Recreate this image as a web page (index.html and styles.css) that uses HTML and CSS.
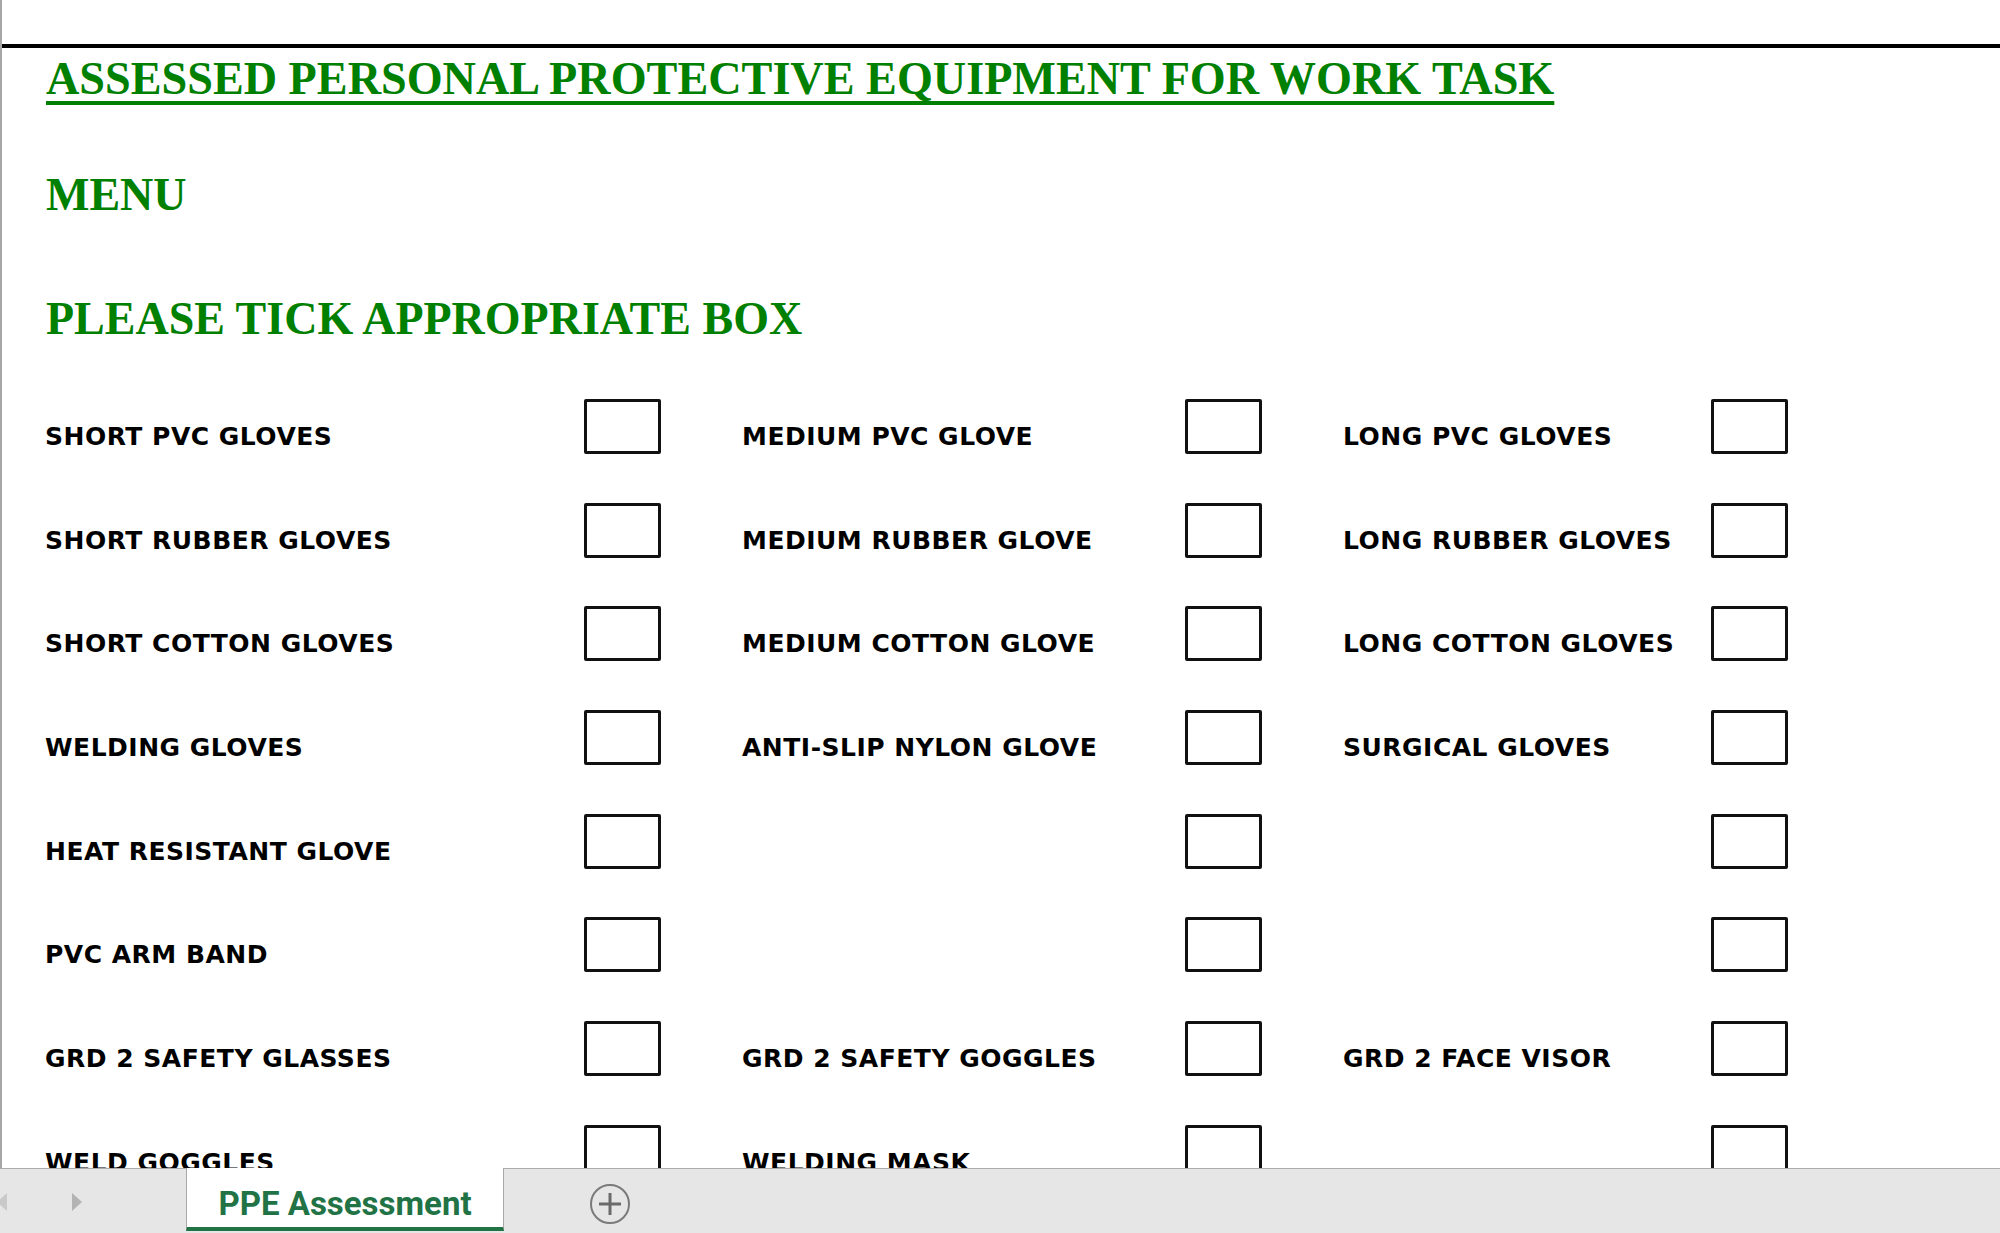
FILE: index.html
```html
<!DOCTYPE html>
<html>
<head>
<meta charset="utf-8">
<link rel="stylesheet" href="styles.css">
</head>
<body>
<div class="sheet">
  <div class="topband"></div>
  <div class="content">
    <h1 class="title">ASSESSED PERSONAL PROTECTIVE EQUIPMENT FOR WORK TASK</h1>
    <h2 class="menu">MENU</h2>
    <h2 class="tick">PLEASE TICK APPROPRIATE BOX</h2>
    <div class="grid">
      <div class="item"><span class="label">SHORT PVC GLOVES</span><span class="box"></span></div>
      <div class="item"><span class="label">MEDIUM PVC GLOVE</span><span class="box"></span></div>
      <div class="item"><span class="label">LONG PVC GLOVES</span><span class="box"></span></div>

      <div class="item"><span class="label">SHORT RUBBER GLOVES</span><span class="box"></span></div>
      <div class="item"><span class="label">MEDIUM RUBBER GLOVE</span><span class="box"></span></div>
      <div class="item"><span class="label">LONG RUBBER GLOVES</span><span class="box"></span></div>

      <div class="item"><span class="label">SHORT COTTON GLOVES</span><span class="box"></span></div>
      <div class="item"><span class="label">MEDIUM COTTON GLOVE</span><span class="box"></span></div>
      <div class="item"><span class="label">LONG COTTON GLOVES</span><span class="box"></span></div>

      <div class="item"><span class="label">WELDING GLOVES</span><span class="box"></span></div>
      <div class="item"><span class="label">ANTI-SLIP NYLON GLOVE</span><span class="box"></span></div>
      <div class="item"><span class="label">SURGICAL GLOVES</span><span class="box"></span></div>

      <div class="item"><span class="label">HEAT RESISTANT GLOVE</span><span class="box"></span></div>
      <div class="item"><span class="label"></span><span class="box"></span></div>
      <div class="item"><span class="label"></span><span class="box"></span></div>

      <div class="item"><span class="label">PVC ARM BAND</span><span class="box"></span></div>
      <div class="item"><span class="label"></span><span class="box"></span></div>
      <div class="item"><span class="label"></span><span class="box"></span></div>

      <div class="item"><span class="label">GRD 2 SAFETY GLASSES</span><span class="box"></span></div>
      <div class="item"><span class="label">GRD 2 SAFETY GOGGLES</span><span class="box"></span></div>
      <div class="item"><span class="label">GRD 2 FACE VISOR</span><span class="box"></span></div>

      <div class="item"><span class="label">WELD GOGGLES</span><span class="box"></span></div>
      <div class="item"><span class="label">WELDING MASK</span><span class="box"></span></div>
      <div class="item"><span class="label"></span><span class="box"></span></div>
    </div>
  </div>
</div>
<div class="tabbar">
  <svg class="nav" width="186" height="64" viewBox="0 0 186 64">
    <polygon points="7,24 7,42 -3,33" fill="#c9c9c9"/>
    <polygon points="72,24 72,42 82,33" fill="#b3b3b3"/>
  </svg>
  <div class="tab">PPE Assessment</div>
  <svg class="plus" width="42" height="42" viewBox="0 0 42 42">
    <circle cx="21" cy="21" r="19" fill="none" stroke="#7a7a7a" stroke-width="2"/>
    <line x1="21" y1="10" x2="21" y2="32" stroke="#6a6a6a" stroke-width="3"/>
    <line x1="10" y1="21" x2="32" y2="21" stroke="#6a6a6a" stroke-width="3"/>
  </svg>
</div>
</body>
</html>
```
FILE: styles.css
```css
html, body {
  margin: 0;
  padding: 0;
  background: #ffffff;
}
body {
  width: 2000px;
  height: 1233px;
  overflow: hidden;
}
.sheet {
  height: 1168px;
  overflow: hidden;
  border-left: 2px solid #a6a6a6;
  box-sizing: border-box;
  background: #fff;
}
.topband {
  height: 44px;
  border-bottom: 4px solid #000;
}
.content {
  padding-left: 44px;
  display: flex;
  flex-direction: column;
}
.title, .menu, .tick {
  margin: 0;
  font-family: "Liberation Serif", "Times New Roman", serif;
  font-weight: bold;
  font-size: 46px;
  line-height: 46px;
  color: #008000;
}
.title {
  margin-top: 8px;
  font-size: 46.2px;
  text-decoration: underline;
  text-decoration-thickness: 4px;
  text-underline-offset: 7px;
}
.menu {
  margin-top: 70px;
}
.tick {
  margin-top: 78px;
}
.grid {
  margin-top: 57px;
  display: grid;
  grid-template-columns: 615px 519px 444px;
  column-gap: 82px;
  grid-auto-rows: 103.7px;
}
.item {
  display: flex;
  align-items: flex-start;
}
.label {
  flex: 1;
  font-family: "DejaVu Sans", "Liberation Sans", sans-serif;
  font-weight: bold;
  font-size: 25px;
  line-height: 29px;
  letter-spacing: 0.5px;
  padding-top: 23px;
  margin-left: -1px;
  color: #000;
  white-space: nowrap;
}
.box {
  width: 77px;
  height: 55px;
  box-sizing: border-box;
  border: 3px solid #111;
  border-radius: 2px;
  flex: none;
}
.tabbar {
  height: 65px;
  box-sizing: border-box;
  background: #e6e6e6;
  border-top: 1px solid #ababab;
  display: flex;
  align-items: flex-start;
}
.nav {
  display: block;
  flex: none;
}
.tab {
  margin-top: -1px;
  width: 318px;
  height: 63px;
  box-sizing: border-box;
  background: #fff;
  border-left: 1px solid #a8a8a8;
  border-right: 1px solid #a8a8a8;
  border-bottom: 4px solid #217346;
  font-family: Roboto, "Open Sans", sans-serif;
  font-weight: bold;
  font-size: 33px;
  line-height: 40px;
  padding-top: 16px;
  text-align: center;
  color: #217346;
}
.plus {
  display: block;
  margin-left: 85px;
  margin-top: 14px;
  flex: none;
}
```
